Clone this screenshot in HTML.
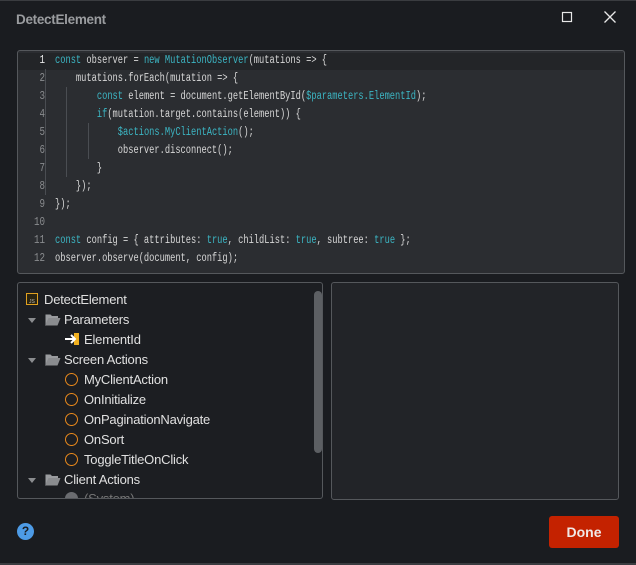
<!DOCTYPE html>
<html><head><style>
*{margin:0;padding:0;box-sizing:border-box}
body{width:636px;height:565px;background:#1a1c20;font-family:"Liberation Sans",sans-serif;position:relative;overflow:hidden;border-top:1px solid #3a3c40;border-bottom:2px solid #3a3c40}
.title{position:absolute;left:16px;top:11px;color:#9a9c9f;font-size:13.5px;font-weight:bold;letter-spacing:-0.3px}
.code{position:absolute;left:17px;top:49px;width:608px;height:224px;background:#2b2d31;border:1px solid #55585c;border-radius:3px;overflow:hidden}
.ln{position:absolute;left:0;width:610px;height:18px;font-family:"Liberation Mono",monospace;font-size:11.5px;line-height:18px;color:#d8d8d8;white-space:pre}
.ln .n{position:absolute;left:0;width:27px;text-align:right;color:#8a8c8f;transform:scaleX(0.8);transform-origin:right}
.ln .c{position:absolute;left:37px;transform:scaleX(0.758);transform-origin:left}
.k{color:#3cb6c4}
.g{position:absolute;width:1px;background:#4a4d52}
.tree{position:absolute;left:17px;top:281px;width:306px;height:217px;border:1px solid #55585c;border-radius:3px;background:#1c1e22;overflow:hidden}
.right{position:absolute;left:331px;top:281px;width:288px;height:218px;border:1px solid #55585c;border-radius:3px;background:#222428}
.it{position:absolute;font-size:13px;color:#e0e0e0;height:20px;line-height:20px;white-space:nowrap;letter-spacing:-0.2px}
.tri{position:absolute;width:0;height:0;border-left:4px solid transparent;border-right:4px solid transparent;border-top:5px solid #8a8c8f}
.circ{position:absolute;width:13px;height:13px;border:1.5px solid #e8891c;border-radius:50%}
.done{position:absolute;left:549px;top:515px;width:70px;height:32px;background:#c42200;border-radius:3px;color:#f0e8e6;font-weight:bold;font-size:14px;text-align:center;line-height:32px}
</style></head><body>
<div class="title">DetectElement</div>
<svg style="position:absolute;left:560px;top:9px" width="14" height="14"><rect x="2.5" y="2.5" width="9" height="9" fill="none" stroke="#e8e8e8" stroke-width="1.2"/></svg>
<svg style="position:absolute;left:602px;top:8px" width="16" height="16"><path d="M2.5 2.5L13.5 13.5M13.5 2.5L2.5 13.5" stroke="#e8e8e8" stroke-width="1.3"/></svg>
<div class="code">
<div style="position:absolute;left:0;top:2px;width:608px;height:17px;background:#232528"></div>
<div class="g" style="left:27px;top:18px;height:126px"></div>
<div class="g" style="left:48px;top:36px;height:90px"></div>
<div class="g" style="left:70px;top:72px;height:36px"></div>
<div class="ln" style="top:1px"><span class="n" style="color:#e8e8e8">1</span><span class="c"><span class="k">const</span> observer = <span class="k">new MutationObserver</span>(mutations =&gt; {</span></div>
<div class="ln" style="top:19px"><span class="n">2</span><span class="c">    mutations.forEach(mutation =&gt; {</span></div>
<div class="ln" style="top:37px"><span class="n">3</span><span class="c">        <span class="k">const</span> element = document.getElementById(<span class="k">$parameters.ElementId</span>);</span></div>
<div class="ln" style="top:55px"><span class="n">4</span><span class="c">        <span class="k">if</span>(mutation.target.contains(element)) {</span></div>
<div class="ln" style="top:73px"><span class="n">5</span><span class="c">            <span class="k">$actions.MyClientAction</span>();</span></div>
<div class="ln" style="top:91px"><span class="n">6</span><span class="c">            observer.disconnect();</span></div>
<div class="ln" style="top:109px"><span class="n">7</span><span class="c">        }</span></div>
<div class="ln" style="top:127px"><span class="n">8</span><span class="c">    });</span></div>
<div class="ln" style="top:145px"><span class="n">9</span><span class="c">});</span></div>
<div class="ln" style="top:163px"><span class="n">10</span><span class="c"></span></div>
<div class="ln" style="top:181px"><span class="n">11</span><span class="c"><span class="k">const</span> config = { attributes: <span class="k">true</span>, childList: <span class="k">true</span>, subtree: <span class="k">true</span> };</span></div>
<div class="ln" style="top:199px"><span class="n">12</span><span class="c">observer.observe(document, config);</span></div>
</div>
<div class="tree">
<svg style="position:absolute;left:8px;top:10px" width="12" height="12"><rect x="0.5" y="0.5" width="11" height="11" fill="#2a2410" stroke="#e0a020"/><text x="3" y="10" font-size="5" fill="#bbb" font-family="Liberation Sans">JS</text></svg>
<div class="it" style="left:26px;top:7px">DetectElement</div>
<div class="tri" style="left:10px;top:35px"></div>
<svg style="position:absolute;left:27px;top:30px" width="16" height="13"><path d="M0.5 1.5h5l1.5 1.5h6v2H4l-3.5 7.5z" fill="#9a9c9f"/><path d="M3.5 5h12l-3 7.5H0z" fill="#8a8c8f"/></svg>
<div class="it" style="left:46px;top:27px">Parameters</div>
<svg style="position:absolute;left:46px;top:50px" width="16" height="12"><rect x="10" y="0" width="5" height="12" fill="#f0b020"/><path d="M1 6h10M7 2l4 4-4 4" stroke="#fff" stroke-width="2" fill="none"/></svg>
<div class="it" style="left:66px;top:47px">ElementId</div>
<div class="tri" style="left:10px;top:75px"></div>
<svg style="position:absolute;left:27px;top:70px" width="16" height="13"><path d="M0.5 1.5h5l1.5 1.5h6v2H4l-3.5 7.5z" fill="#9a9c9f"/><path d="M3.5 5h12l-3 7.5H0z" fill="#8a8c8f"/></svg>
<div class="it" style="left:46px;top:67px">Screen Actions</div>
<div class="circ" style="left:47px;top:90px"></div><div class="it" style="left:66px;top:87px">MyClientAction</div>
<div class="circ" style="left:47px;top:110px"></div><div class="it" style="left:66px;top:107px">OnInitialize</div>
<div class="circ" style="left:47px;top:130px"></div><div class="it" style="left:66px;top:127px">OnPaginationNavigate</div>
<div class="circ" style="left:47px;top:150px"></div><div class="it" style="left:66px;top:147px">OnSort</div>
<div class="circ" style="left:47px;top:170px"></div><div class="it" style="left:66px;top:167px">ToggleTitleOnClick</div>
<div class="tri" style="left:10px;top:195px"></div>
<svg style="position:absolute;left:27px;top:190px" width="16" height="13"><path d="M0.5 1.5h5l1.5 1.5h6v2H4l-3.5 7.5z" fill="#9a9c9f"/><path d="M3.5 5h12l-3 7.5H0z" fill="#8a8c8f"/></svg>
<div class="it" style="left:46px;top:187px">Client Actions</div>
<div style="position:absolute;left:47px;top:209px;width:13px;height:13px;border-radius:50%;background:#6a6c70"></div>
<div class="it" style="left:66px;top:206px;color:#777">(System)</div>
<div style="position:absolute;left:296px;top:8px;width:8px;height:162px;border-radius:4px;background:#5c5f63"></div>
</div>
<div class="right"></div>
<div style="position:absolute;left:17px;top:522px;width:17px;height:17px;border-radius:50%;background:#4d9be6;color:#1a1c20;font-weight:bold;font-size:12px;text-align:center;line-height:17px">?</div>
<div class="done">Done</div>
</body></html>
